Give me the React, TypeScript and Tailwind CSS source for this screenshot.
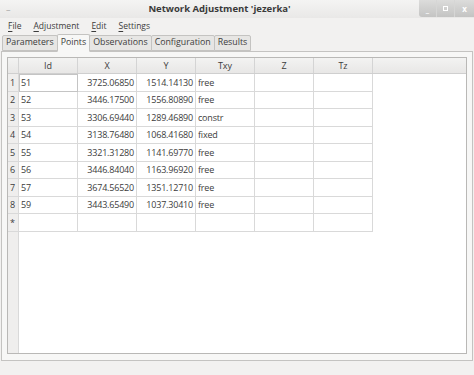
import React from "react";

type Point = {
  id: string;
  x: string;
  y: string;
  txy: string;
};

const points: Point[] = [
  { id: "51", x: "3725.06850", y: "1514.14130", txy: "free" },
  { id: "52", x: "3446.17500", y: "1556.80890", txy: "free" },
  { id: "53", x: "3306.69440", y: "1289.46890", txy: "constr" },
  { id: "54", x: "3138.76480", y: "1068.41680", txy: "fixed" },
  { id: "55", x: "3321.31280", y: "1141.69770", txy: "free" },
  { id: "56", x: "3446.84040", y: "1163.96920", txy: "free" },
  { id: "57", x: "3674.56520", y: "1351.12710", txy: "free" },
  { id: "59", x: "3443.65490", y: "1037.30410", txy: "free" },
];

const rowHeights = ["h-[18px]", "h-[17px]", "h-[18px]", "h-[17px]", "h-[18px]", "h-[17px]", "h-[18px]", "h-[17px]", "h-[18px]"];

const headers = ["Id", "X", "Y", "Txy", "Z", "Tz"];
const tabs = ["Parameters", "Points", "Observations", "Configuration", "Results"];

const Mnemonic = ({ label }: { label: string }) => (
  <span>
    <span className="underline underline-offset-2">{label[0]}</span>
    {label.slice(1)}
  </span>
);

const Cell = ({ children, align = "left", focused = false }: { children?: React.ReactNode; align?: "left" | "right"; focused?: boolean }) => (
  <div
    className={`w-[59px] shrink-0 border-r border-b border-[#d9d9d9] flex items-center px-[2px] tracking-[-0.2px] ${
      align === "right" ? "justify-end" : "justify-start"
    } ${focused ? "outline outline-1 -outline-offset-1 outline-[#c4c4c4]" : ""}`}
  >
    {children}
  </div>
);

export default function App() {
  return (
    <div
      className="w-[474px] h-[375px] bg-[#f2f1f0] flex flex-col text-[#3c3c3c] text-[9px] overflow-hidden"
      style={{ fontFamily: '"Open Sans", "Noto Sans", sans-serif' }}
    >
      {/* title bar */}
      <div className="h-[18px] shrink-0 flex items-center bg-gradient-to-b from-[#f4f4f3] to-[#e9e8e7]">
        <div className="w-[14px] pl-[6px] text-[#a8a8a8] text-[9px] leading-none">–</div>
        <div className="flex-1 flex justify-center pl-[6px] font-bold text-[9.5px] text-[#3a3a3a]">
          Network Adjustment 'jezerka'
        </div>
        <div className="flex h-[17px] self-start rounded-bl-[3px] overflow-hidden bg-gradient-to-b from-[#dcdcdb] to-[#c4c4c3] text-white text-[8px] font-bold">
          <div className="w-[18px] flex items-center justify-center border-r border-[#d6d6d5]">_</div>
          <div className="w-[18px] flex items-center justify-center border-r border-[#d6d6d5]">
            <div className="w-[5px] h-[5px] border border-white" />
          </div>
          <div className="w-[19px] flex items-center justify-center">x</div>
        </div>
      </div>

      {/* menu bar */}
      <div className="h-[17px] shrink-0 flex items-center gap-[12px] pl-[8px] text-[8.5px]">
        <Mnemonic label="File" />
        <Mnemonic label="Adjustment" />
        <Mnemonic label="Edit" />
        <Mnemonic label="Settings" />
      </div>

      {/* tabs */}
      <div className="h-[16px] shrink-0 flex items-end pl-[2px] relative z-10">
        {tabs.map((t) => {
          const active = t === "Points";
          return (
            <div
              key={t}
              className={`px-[3px] flex items-center border border-[#c4c3c1] rounded-t-[2px] -mr-px text-[8.8px] ${
                active
                  ? "h-[18px] bg-[#f7f7f6] border-b-[#f7f7f6] mb-[-1px] pb-[1px]"
                  : "h-[16px] bg-[#e7e6e4]"
              }`}
            >
              {t}
            </div>
          );
        })}
      </div>

      {/* tab panel */}
      <div className="flex-1 mx-[1px] mb-[14px] border border-[#c4c3c1] bg-[#f7f7f6] pt-[5px] px-[5px] pb-[6px] flex">
        <div className="flex-1 border border-[#b9b8b6] bg-white flex flex-col">
          {/* header */}
          <div className="h-[16px] shrink-0 flex bg-gradient-to-b from-[#f3f3f2] to-[#e8e7e6] border-b border-[#cfcfcf]">
            <div className="w-[11px] shrink-0 border-r border-[#d4d4d4]" />
            {headers.map((h) => (
              <div key={h} className="w-[59px] shrink-0 border-r border-[#d4d4d4] flex items-center justify-center">
                {h}
              </div>
            ))}
            <div className="flex-1" />
          </div>

          {/* body */}
          <div className="flex-1 flex">
            <div className="w-[11px] shrink-0 bg-[#efeeed] border-r border-[#d9d9d9] flex flex-col">
              {rowHeights.map((rh, i) => (
                <div key={i} className={`${rh} border-b border-[#d9d9d9] flex items-center pl-[2px]`}>
                  {i < points.length ? i + 1 : "*"}
                </div>
              ))}
            </div>
            <div className="flex flex-col">
              {rowHeights.map((rh, i) => {
                const p = points[i];
                return (
                  <div key={i} className={`${rh} flex`}>
                    <Cell focused={i === 0}>{p?.id}</Cell>
                    <Cell align="right">{p?.x}</Cell>
                    <Cell align="right">{p?.y}</Cell>
                    <Cell>{p?.txy}</Cell>
                    <Cell />
                    <Cell />
                  </div>
                );
              })}
            </div>
          </div>
        </div>
      </div>
    </div>
  );
}
